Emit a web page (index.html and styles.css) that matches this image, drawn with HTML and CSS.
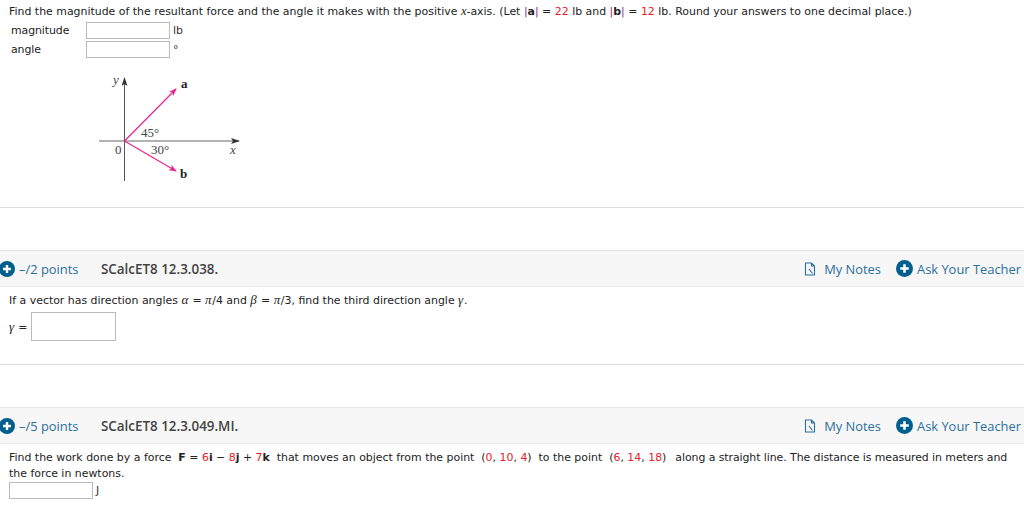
FILE: index.html
```html
<!DOCTYPE html>
<html lang="en">
<head>
<meta charset="utf-8">
<title>Vector questions</title>
<link rel="stylesheet" href="styles.css">
</head>
<body>
<section class="q1">
  <p class="text">Find the magnitude of the resultant force and the angle it makes with the positive <i class="mi">x</i>-axis. (Let <span class="pipe">|</span><b>a</b><span class="pipe">|</span> = <span class="red">22</span> lb and <span class="pipe">|</span><b>b</b><span class="pipe">|</span> = <span class="red">12</span> lb. Round your answers to one decimal place.)</p>
  <div class="answers">
    <span class="label">magnitude</span><span class="box"></span><span class="unit">lb</span>
    <span class="label">angle</span><span class="box"></span><span class="unit">°</span>
  </div>
  <svg class="figure" width="150" height="112" viewBox="0 0 150 112">
    <defs>
      <marker id="pink" markerWidth="8" markerHeight="6" refX="7" refY="3" orient="auto" markerUnits="userSpaceOnUse"><path d="M0 0L8 3L0 6L2 3Z" fill="#e6268c"/></marker>
      <marker id="dark" markerWidth="9" markerHeight="6" refX="8" refY="3" orient="auto" markerUnits="userSpaceOnUse"><path d="M0 0L9 3L0 6L2 3Z" fill="#333"/></marker>
    </defs>
    <line x1="2" y1="68" x2="142" y2="68" stroke="#999" stroke-width="1.4" marker-end="url(#dark)"/>
    <line x1="27.5" y1="108" x2="27.5" y2="5" stroke="#555" stroke-width="1" marker-end="url(#dark)"/>
    <line x1="27.5" y1="68" x2="79" y2="16" stroke="#e6268c" stroke-width="1.2" marker-end="url(#pink)"/>
    <line x1="27.5" y1="68" x2="79" y2="98" stroke="#e6268c" stroke-width="1.2" marker-end="url(#pink)"/>
    <text class="fig it" x="16" y="11">y</text>
    <text class="fig bold" x="84" y="15">a</text>
    <text class="fig" x="44" y="64">45°</text>
    <text class="fig" x="54" y="81">30°</text>
    <text class="fig" x="18" y="81">0</text>
    <text class="fig it" x="133" y="81">x</text>
    <text class="fig bold" x="83" y="105">b</text>
  </svg>
</section>

<header class="bar bar-2">
  <svg class="plus" width="16" height="16" viewBox="0 0 16 16"><circle cx="8" cy="8" r="8" fill="#005f8f"/><path d="M8 4v8M4 8h8" stroke="#fff" stroke-width="2.4"/></svg>
  <span class="points">–/2 points</span>
  <span class="code">SCalcET8 12.3.038.</span>
  <span class="tools">
    <svg class="note" width="12" height="14" viewBox="0 0 12 14"><path d="M1.5 1h6l3 3v9h-9zM7.5 1v3h3M5 7l3.5 4.5" fill="none" stroke="#2b6f9c" stroke-width="1.1"/></svg>
    <span class="link notes">My Notes</span>
    <svg class="plus" width="17" height="17" viewBox="0 0 16 16"><circle cx="8" cy="8" r="8" fill="#005f8f"/><path d="M8 4v8M4 8h8" stroke="#fff" stroke-width="2.4"/></svg>
    <span class="link">Ask Your Teacher</span>
  </span>
</header>
<section class="q2">
  <p class="text">If a vector has direction angles <i class="greek">α</i> = <i class="greek">π</i>/4 and <i class="greek">β</i> = <i class="greek">π</i>/3, find the third direction angle <i class="greek">γ</i>.</p>
  <div class="gamma"><span class="gamma-label"><i class="greek">γ</i> =</span><span class="box big"></span></div>
</section>

<header class="bar bar-3">
  <svg class="plus" width="16" height="16" viewBox="0 0 16 16"><circle cx="8" cy="8" r="8" fill="#005f8f"/><path d="M8 4v8M4 8h8" stroke="#fff" stroke-width="2.4"/></svg>
  <span class="points">–/5 points</span>
  <span class="code">SCalcET8 12.3.049.MI.</span>
  <span class="tools">
    <svg class="note" width="12" height="14" viewBox="0 0 12 14"><path d="M1.5 1h6l3 3v9h-9zM7.5 1v3h3M5 7l3.5 4.5" fill="none" stroke="#2b6f9c" stroke-width="1.1"/></svg>
    <span class="link notes">My Notes</span>
    <svg class="plus" width="17" height="17" viewBox="0 0 16 16"><circle cx="8" cy="8" r="8" fill="#005f8f"/><path d="M8 4v8M4 8h8" stroke="#fff" stroke-width="2.4"/></svg>
    <span class="link">Ask Your Teacher</span>
  </span>
</header>
<section class="q3">
  <p class="text wrap">Find the work done by a force&nbsp; <b>F</b> = <span class="red">6</span><b>i</b> − <span class="red">8</span><b>j</b> + <span class="red">7</span><b>k</b>&nbsp; that moves an object from the point&nbsp; (<span class="red">0</span>, <span class="red">10</span>, <span class="red">4</span>)&nbsp; to the point&nbsp; (<span class="red">6</span>, <span class="red">14</span>, <span class="red">18</span>)&nbsp; <span class="tail">along a straight line. The distance is measured in meters and</span> the force in newtons.</p>
  <div class="joule"><span class="box"></span><span class="unit">J</span></div>
</section>
</body>
</html>
```
FILE: styles.css
```css
* { box-sizing: border-box; }
html, body { margin: 0; padding: 0; background: #fff; }
body { height: 507px; overflow: hidden; font-family: "DejaVu Sans", Verdana, sans-serif; font-size: 10.93px; color: #222; }
p { margin: 0; }
.text { line-height: 16px; white-space: nowrap; }
.wrap { white-space: normal; }
.tail { letter-spacing: -0.07px; margin-left: 2px; }
.red { color: #e8202a; }
.pipe { color: #8a2a8a; }
.mi { font-family: "Liberation Serif", serif; font-size: 12.5px; }
.greek { font-family: "Liberation Serif", serif; font-size: 13px; margin-right: 0.7px; }
.q1 { height: 208px; padding: 3px 9px 0; border-bottom: 1px solid #ddd; }
.answers { display: grid; grid-template-columns: 75px 84px auto; grid-auto-rows: 19px; align-items: center; margin-top: 1px; padding-left: 2px; }
.label { color: #222; padding-bottom: 1px; letter-spacing: -0.08px; }
.box { display: block; height: 17px; width: 84px; border: 1px solid #bbb; background: #fff; }
.unit { padding-left: 3px; color: #333; }
.figure { display: block; margin: 14px 0 0 88px; }
.fig { font-family: "Liberation Serif", serif; font-size: 13px; fill: #444; }
.bold { font-weight: bold; fill: #222; }
.it { font-style: italic; }
.bar { display: flex; align-items: center; height: 37px; background: #f7f7f7; border-top: 1px solid #e4e4e4; border-bottom: 1px solid #ebebeb; font-family: "Open Sans", sans-serif; font-size: 12.9px; padding-right: 3px; }
.bar-2 { margin-top: 42px; }
.bar-3 { margin-top: 42px; }
.plus { flex: none; }
.bar > .plus { margin-left: -1px; }
.points { margin-left: 4px; width: 82px; color: #2b6f9c; font-weight: 500; }
.code { color: #444; font-weight: 600; font-size: 13.4px; }
.tools { margin-left: auto; display: flex; align-items: center; }
.note { margin-right: 8px; }
.link { color: #2b6f9c; font-weight: 500; }
.notes { margin-right: 15px; }
.tools .plus { margin-right: 4px; }
.q2 { height: 78px; padding: 5px 9px 0; border-bottom: 1px solid #ddd; }
.gamma { display: flex; align-items: center; margin-top: 3px; height: 29px; }
.gamma-label { width: 22px; }
.big { width: 85px; height: 29px; }
.q3 { padding: 6px 9px 0; }
.joule { display: flex; align-items: center; }
.joule .box { width: 84px; }
```
